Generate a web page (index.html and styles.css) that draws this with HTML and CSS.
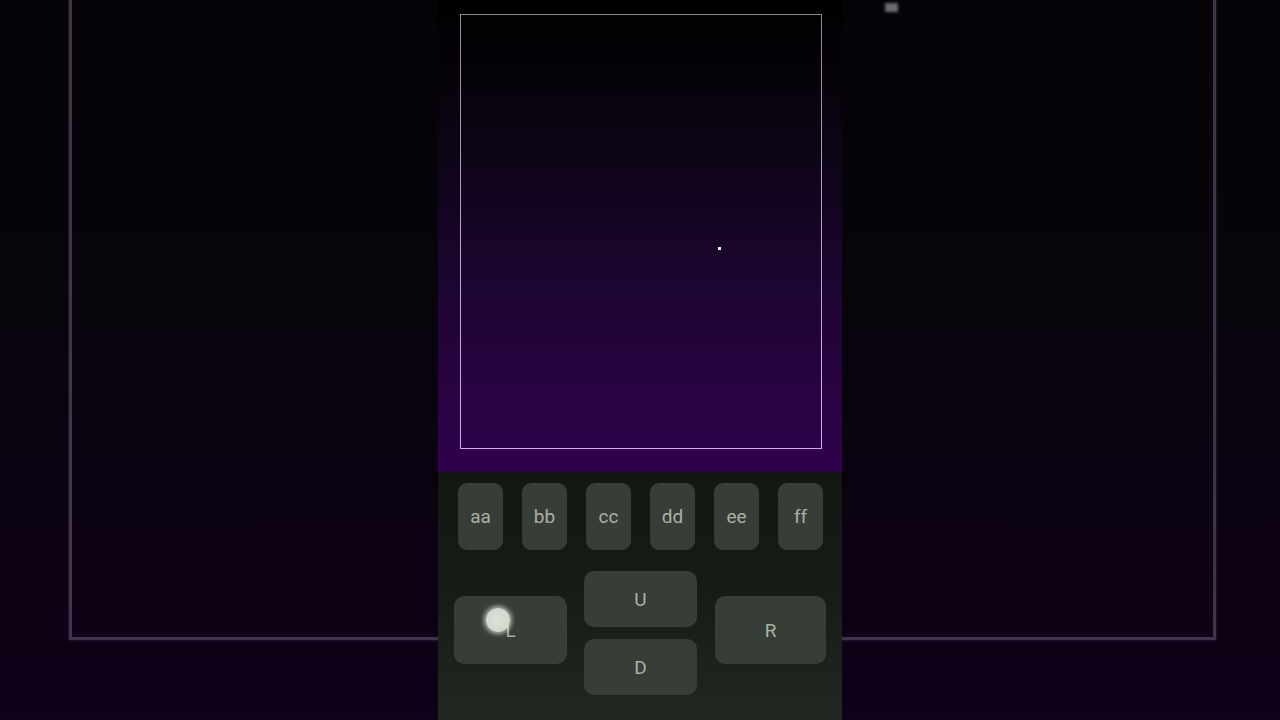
FILE: index.html
```html
<!DOCTYPE html>
<html lang="en">
<head>
<meta charset="utf-8">
<title>Controller</title>
<link rel="stylesheet" href="styles.css">
</head>
<body>
<div class="stage">
  <div class="backdrop-frame"></div>
  <div class="backdrop-blob"></div>
  <main class="phone">
    <section class="screen">
      <div class="canvas">
        <span class="dot"></span>
      </div>
    </section>
    <section class="pad">
      <div class="keys">
        <button class="key">aa</button>
        <button class="key">bb</button>
        <button class="key">cc</button>
        <button class="key">dd</button>
        <button class="key">ee</button>
        <button class="key">ff</button>
      </div>
      <div class="dpad">
        <button class="key dir left">L</button>
        <button class="key dir up">U</button>
        <button class="key dir down">D</button>
        <button class="key dir right">R</button>
        <span class="touch"></span>
      </div>
    </section>
  </main>
</div>
</body>
</html>
```
FILE: styles.css
```css
html, body {
  margin: 0;
  padding: 0;
  width: 1280px;
  height: 720px;
  overflow: hidden;
  background: linear-gradient(#050307 0%, #07040b 40%, #0c0114 80%, #0e0118 100%);
  font-family: Roboto, "Noto Sans", "Liberation Sans", sans-serif;
}

.stage {
  position: relative;
  display: grid;
  width: 1280px;
  height: 720px;
}

.backdrop-frame {
  grid-area: 1 / 1;
  margin: -10px 64px 80px 69px;
  border: 3px solid #3f3449;
  box-shadow: 0 0 3px rgba(80, 66, 92, 0.6);
}

.backdrop-blob {
  position: absolute;
  left: 885px;
  top: 3px;
  width: 13px;
  height: 9px;
  background: #6e6a72;
  filter: blur(1.5px);
}

.phone {
  grid-area: 1 / 1;
  justify-self: center;
  width: 404px;
  height: 720px;
  display: flex;
  flex-direction: column;
  position: relative;
}

.screen {
  height: 472px;
  background: linear-gradient(#000000 0%, #050208 15%, #0f0519 35%, #1c0530 60%, #2a0344 85%, #2e024b 100%);
  padding: 14px 0 0 22px;
  box-sizing: border-box;
}

.canvas {
  position: relative;
  width: 362px;
  height: 435px;
  box-sizing: border-box;
  border: 1.5px solid;
  border-image: linear-gradient(#958799, #b7a1c6 50%, #d4aaf0) 1;
}

.dot {
  position: absolute;
  left: 257px;
  top: 232px;
  width: 3px;
  height: 3px;
  background: #f4eef8;
}

.pad {
  flex: 1;
  background: linear-gradient(#131712 0%, #181c17 50%, #222722 100%);
  padding: 11px 0 0 20px;
  position: relative;
}

.key {
  border: none;
  margin: 0;
  padding: 0;
  background: #373d37;
  color: #a9b1a6;
  font-family: Roboto, "Noto Sans", "Liberation Sans", sans-serif;
  font-size: 19px;
  border-radius: 9px;
  display: flex;
  align-items: center;
  justify-content: center;
}

.keys {
  display: flex;
  gap: 19px;
}

.keys .key {
  width: 45px;
  height: 67px;
}

.dpad {
  display: grid;
  grid-template-columns: 113px 113px 112px;
  grid-template-rows: 56px 56px;
  column-gap: 17px;
  row-gap: 12px;
  margin: 21px 0 0 -4px;
  position: relative;
}

.dir.left {
  grid-column: 1;
  grid-row: 1 / 3;
  height: 68px;
  align-self: start;
  margin-top: 25px;
}

.dir.up {
  grid-column: 2;
  grid-row: 1;
}

.dir.down {
  grid-column: 2;
  grid-row: 2;
}

.dir.right {
  grid-column: 3;
  grid-row: 1 / 3;
  height: 68px;
  align-self: start;
  margin-top: 25px;
  margin-left: 1px;
}

.dir {
  border-radius: 10px;
}

.touch {
  position: absolute;
  left: 32px;
  top: 37px;
  width: 24px;
  height: 24px;
  border-radius: 50%;
  background: radial-gradient(circle, #dfe3da 0%, #d3d8cf 60%, #eef0ea 100%);
  box-shadow: 0 0 4px 2px rgba(230, 235, 225, 0.7);
}
```
